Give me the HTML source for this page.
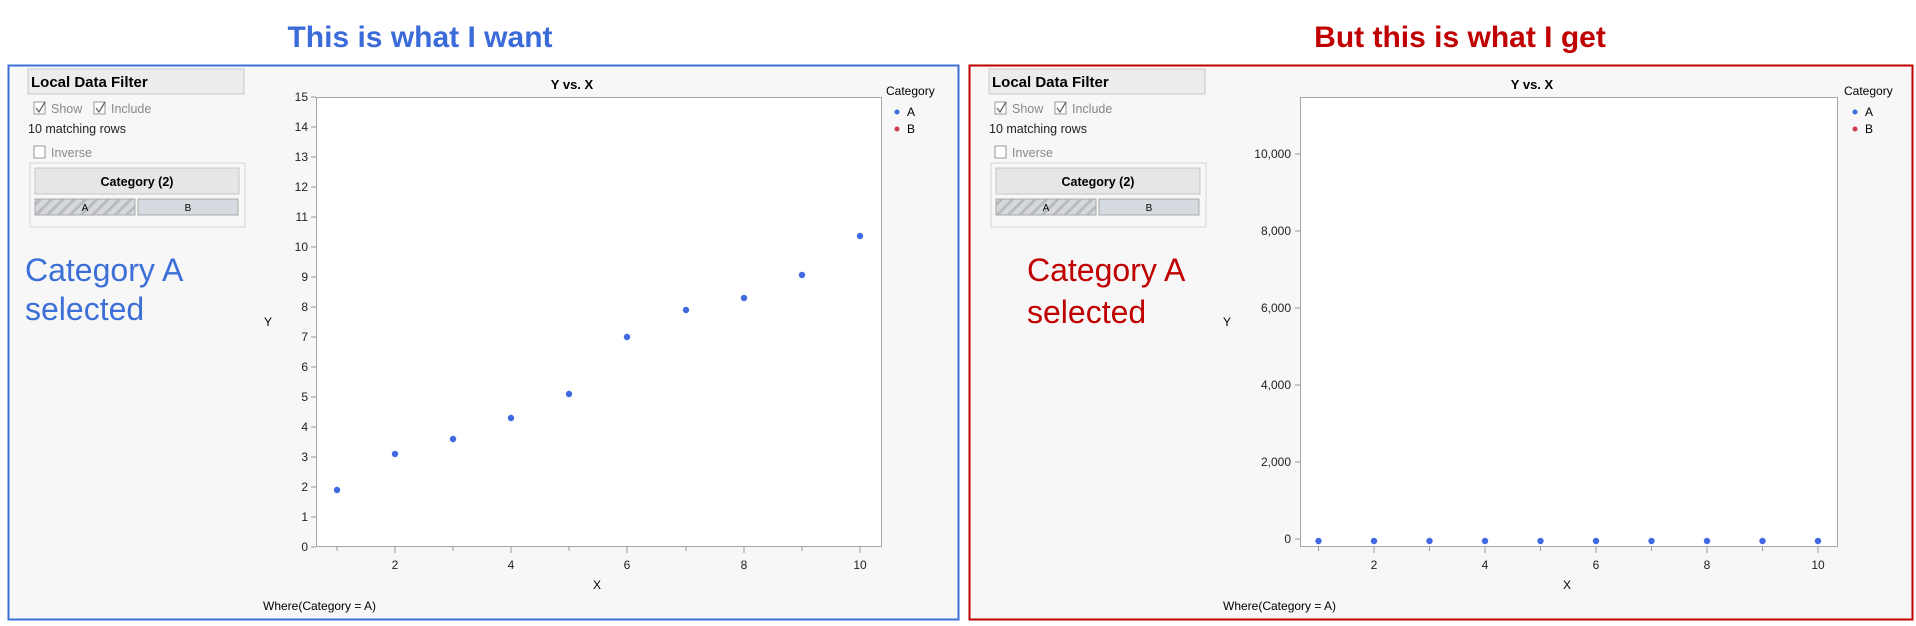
<!DOCTYPE html>
<html><head><meta charset="utf-8"><style>
html,body{margin:0;padding:0;background:#fff;}
svg text{font-family:"Liberation Sans",sans-serif;}
</style></head><body>
<svg width="1916" height="621" viewBox="0 0 1916 621" xmlns="http://www.w3.org/2000/svg">
<defs>
<pattern id="hatch" width="8" height="8" patternUnits="userSpaceOnUse" patternTransform="rotate(45)">
<rect width="8" height="8" fill="#d6d8dc"/><rect width="3" height="8" fill="#b8bbc0"/>
</pattern>
<g id="filt">
  <rect x="28" y="69" width="216" height="25" fill="#ececec" stroke="#c8c8c8"/>
  <text x="31" y="87" font-size="15" font-weight="bold" fill="#000">Local Data Filter</text>
  <rect x="34" y="102" width="11" height="12" fill="#fff" stroke="#999"/>
  <path d="M36 108 l3 4 l6 -10" stroke="#666" stroke-width="1.3" fill="none"/>
  <text x="51" y="113" font-size="12.5" fill="#888">Show</text>
  <rect x="94" y="102" width="11" height="12" fill="#fff" stroke="#999"/>
  <path d="M96 108 l3 4 l6 -10" stroke="#666" stroke-width="1.3" fill="none"/>
  <text x="111" y="113" font-size="12.5" fill="#888">Include</text>
  <text x="28" y="133" font-size="12.5" fill="#222">10 matching rows</text>
  <rect x="34" y="146" width="11" height="12" fill="#fff" stroke="#999"/>
  <text x="51" y="157" font-size="12.5" fill="#888">Inverse</text>
  <rect x="30" y="163" width="215" height="64" fill="#f7f7f7" stroke="#d4d4d4"/>
  <rect x="35" y="168" width="204" height="26" fill="#e6e6e6" stroke="#c4c4c4"/>
  <text x="137" y="186" font-size="12.5" font-weight="bold" text-anchor="middle" fill="#000">Category (2)</text>
  <rect x="35" y="199" width="100" height="16" fill="url(#hatch)" stroke="#a8a8a8"/>
  <text x="85" y="211" font-size="10" text-anchor="middle" fill="#000">A</text>
  <rect x="138" y="199" width="100" height="16" fill="#d6dbe1" stroke="#a8a8a8"/>
  <text x="188" y="211" font-size="10" text-anchor="middle" fill="#000">B</text>
</g>
</defs>

<!-- Titles -->
<text x="420" y="47" font-size="30" font-weight="bold" fill="#3b6bd8" text-anchor="middle">This is what I want</text>
<text x="1460" y="47" font-size="30" font-weight="bold" fill="#c00000" text-anchor="middle">But this is what I get</text>

<!-- LEFT PANEL -->
<rect x="8.5" y="65.5" width="950" height="554" fill="#f7f7f7" stroke="#3c6fd8" stroke-width="2"/>
<use href="#filt"/>
<text x="25" y="281" font-size="32" fill="#3c6fd8">Category A</text>
<text x="25" y="320" font-size="32" fill="#3c6fd8">selected</text>

<text x="572" y="89" font-size="13" font-weight="bold" text-anchor="middle">Y vs. X</text>
<rect x="316.5" y="97.5" width="565" height="449" fill="#fff" stroke="#a6a6a6"/>
<g font-size="12" fill="#222" text-anchor="end">
<text x="308" y="551">0</text><text x="308" y="521">1</text><text x="308" y="491">2</text><text x="308" y="461">3</text>
<text x="308" y="431">4</text><text x="308" y="401">5</text><text x="308" y="371">6</text><text x="308" y="341">7</text>
<text x="308" y="311">8</text><text x="308" y="281">9</text><text x="308" y="251">10</text><text x="308" y="221">11</text>
<text x="308" y="191">12</text><text x="308" y="161">13</text><text x="308" y="131">14</text><text x="308" y="101">15</text>
</g>
<path stroke="#999" d="M311 547h5M311 517h5M311 487h5M311 457h5M311 427h5M311 397h5M311 367h5M311 337h5M311 307h5M311 277h5M311 247h5M311 217h5M311 187h5M311 157h5M311 127h5M311 97h5
M337 547v4M395 547v6M453 547v4M511 547v6M569 547v4M627 547v6M686 547v4M744 547v6M802 547v4M860 547v6"/>
<g font-size="12" fill="#222" text-anchor="middle">
<text x="395" y="569">2</text><text x="511" y="569">4</text><text x="627" y="569">6</text><text x="744" y="569">8</text><text x="860" y="569">10</text>
</g>
<text x="597" y="589" font-size="12" text-anchor="middle">X</text>
<text x="268" y="326" font-size="12" text-anchor="middle">Y</text>
<text x="263" y="610" font-size="12">Where(Category = A)</text>
<g fill="#4169e1">
<circle cx="337" cy="490" r="3.2"/><circle cx="395" cy="454" r="3.2"/><circle cx="453" cy="439" r="3.2"/>
<circle cx="511" cy="418" r="3.2"/><circle cx="569" cy="394" r="3.2"/><circle cx="627" cy="337" r="3.2"/>
<circle cx="686" cy="310" r="3.2"/><circle cx="744" cy="298" r="3.2"/><circle cx="802" cy="275" r="3.2"/>
<circle cx="860" cy="236" r="3.2"/>
</g>
<text x="886" y="95" font-size="12">Category</text>
<circle cx="897" cy="112" r="2.5" fill="#4169e1"/><text x="907" y="116" font-size="12">A</text>
<circle cx="897" cy="129" r="2.5" fill="#d0394b"/><text x="907" y="133" font-size="12">B</text>

<!-- RIGHT PANEL -->
<rect x="969.5" y="65.5" width="943" height="554" fill="#f7f7f7" stroke="#c00000" stroke-width="2"/>
<use href="#filt" transform="translate(961,0)"/>
<text x="1027" y="281" font-size="32" fill="#c00000">Category A</text>
<text x="1027" y="323" font-size="32" fill="#c00000">selected</text>

<text x="1532" y="89" font-size="13" font-weight="bold" text-anchor="middle">Y vs. X</text>
<rect x="1300.5" y="97.5" width="537" height="449" fill="#fff" stroke="#a6a6a6"/>
<g font-size="12" fill="#222" text-anchor="end">
<text x="1291" y="543">0</text><text x="1291" y="466">2,000</text><text x="1291" y="389">4,000</text>
<text x="1291" y="312">6,000</text><text x="1291" y="235">8,000</text><text x="1291" y="158">10,000</text>
</g>
<path stroke="#999" d="M1295 539h5M1295 462h5M1295 385h5M1295 308h5M1295 231h5M1295 154h5
M1318.5 547v4M1374 547v6M1429.5 547v4M1485 547v6M1540.5 547v4M1596 547v6M1651.5 547v4M1707 547v6M1762.5 547v4M1818 547v6"/>
<g font-size="12" fill="#222" text-anchor="middle">
<text x="1374" y="569">2</text><text x="1485" y="569">4</text><text x="1596" y="569">6</text><text x="1707" y="569">8</text><text x="1818" y="569">10</text>
</g>
<text x="1567" y="589" font-size="12" text-anchor="middle">X</text>
<text x="1227" y="326" font-size="12" text-anchor="middle">Y</text>
<text x="1223" y="610" font-size="12">Where(Category = A)</text>
<g fill="#4169e1">
<circle cx="1318.5" cy="541" r="3.2"/><circle cx="1374" cy="541" r="3.2"/><circle cx="1429.5" cy="541" r="3.2"/>
<circle cx="1485" cy="541" r="3.2"/><circle cx="1540.5" cy="541" r="3.2"/><circle cx="1596" cy="541" r="3.2"/>
<circle cx="1651.5" cy="541" r="3.2"/><circle cx="1707" cy="541" r="3.2"/><circle cx="1762.5" cy="541" r="3.2"/>
<circle cx="1818" cy="541" r="3.2"/>
</g>
<text x="1844" y="95" font-size="12">Category</text>
<circle cx="1855" cy="112" r="2.5" fill="#4169e1"/><text x="1865" y="116" font-size="12">A</text>
<circle cx="1855" cy="129" r="2.5" fill="#d0394b"/><text x="1865" y="133" font-size="12">B</text>
</svg>
</body></html>
